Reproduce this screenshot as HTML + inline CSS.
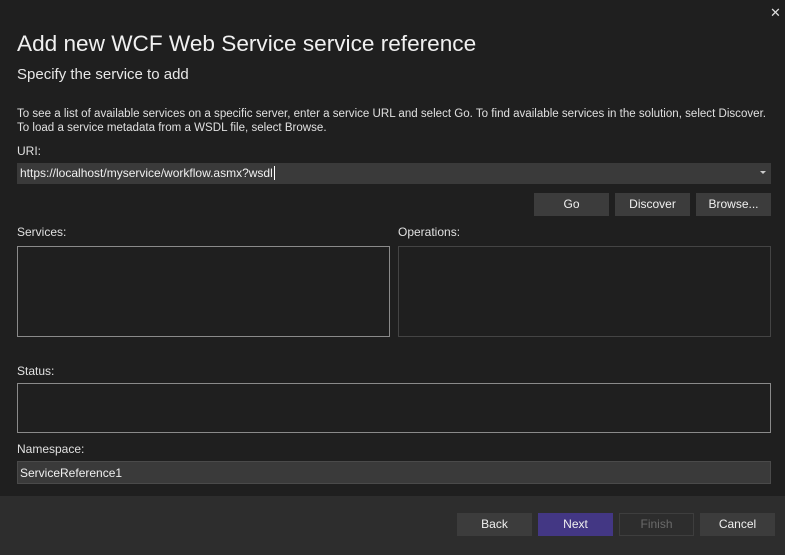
<!DOCTYPE html><html><head><style>
body{margin:0;width:785px;height:555px;background:#1f1f1f;font-family:"Liberation Sans",sans-serif;color:#e0e0e0;position:relative;overflow:hidden}
div{position:absolute;box-sizing:border-box}
.t{font-size:12px;white-space:nowrap}
.btn{background:#3c3c3c;color:#f0f0f0;font-size:12px;text-align:center}
.box{border:1px solid #6f6f6f}
</style></head><body>
<div class="t" style="left:770px;top:5px;font-size:13px;color:#ddd">✕</div>
<div style="left:17px;top:31px;font-size:22.6px;color:#f0f0f0;white-space:nowrap">Add new WCF Web Service service reference</div>
<div style="left:17px;top:66px;font-size:15px;color:#e8e8e8;white-space:nowrap">Specify the service to add</div>
<div class="t" style="left:17px;top:107px;font-size:11.55px;line-height:14px">To see a list of available services on a specific server, enter a service URL and select Go. To find available services in the solution, select Discover.<br>To load a service metadata from a WSDL file, select Browse.</div>
<div class="t" style="left:17px;top:144px">URI:</div>
<div style="left:17px;top:163px;width:754px;height:21px;background:#3a3a3a"></div>
<div class="t" style="left:20px;top:166px;color:#f0f0f0">https://localhost/myservice/workflow.asmx?wsdl<span style="border-left:1px solid #fff;margin-left:1px"></span></div>
<div style="left:760px;top:171px;border:3px solid transparent;border-top:3px solid #ccc"></div>
<div class="btn" style="left:534px;top:193px;width:75px;height:23px;line-height:23px">Go</div>
<div class="btn" style="left:615px;top:193px;width:75px;height:23px;line-height:23px">Discover</div>
<div class="btn" style="left:696px;top:193px;width:75px;height:23px;line-height:23px">Browse...</div>
<div class="t" style="left:17px;top:225px">Services:</div>
<div class="box" style="left:17px;top:246px;width:373px;height:91px;border-color:#8a8a8a"></div>
<div class="t" style="left:398px;top:225px">Operations:</div>
<div class="box" style="left:398px;top:246px;width:373px;height:91px;border-color:#444"></div>
<div class="t" style="left:17px;top:364px">Status:</div>
<div class="box" style="left:17px;top:383px;width:754px;height:50px;border-color:#8a8a8a"></div>
<div class="t" style="left:17px;top:442px">Namespace:</div>
<div style="left:17px;top:461px;width:754px;height:23px;background:#3a3a3a;border:1px solid #4a4a4a"></div>
<div class="t" style="left:20px;top:466px;color:#f0f0f0">ServiceReference1</div>
<div style="left:0;top:496px;width:785px;height:59px;background:#2d2d2d"></div>
<div class="btn" style="left:457px;top:513px;width:75px;height:23px;line-height:23px">Back</div>
<div class="btn" style="left:538px;top:513px;width:75px;height:23px;line-height:23px;background:#433784">Next</div>
<div class="btn" style="left:619px;top:513px;width:75px;height:23px;line-height:21px;background:#2d2d2d;border:1px solid #3e3e3e;color:#6a6a6a">Finish</div>
<div class="btn" style="left:700px;top:513px;width:75px;height:23px;line-height:23px">Cancel</div>
</body></html>
